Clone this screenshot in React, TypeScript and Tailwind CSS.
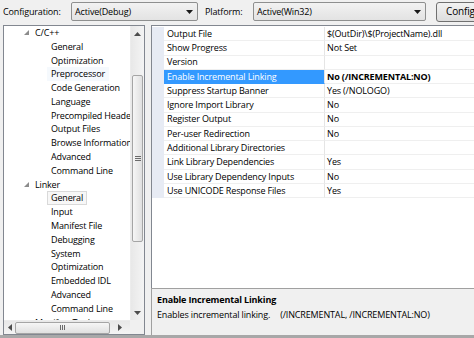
import React from 'react';

const treeRows: { label: string; level: number; expanded?: boolean; selected?: boolean; hover?: boolean }[] = [
  { label: 'C/C++', level: 1, expanded: true },
  { label: 'General', level: 2 },
  { label: 'Optimization', level: 2 },
  { label: 'Preprocessor', level: 2, hover: true },
  { label: 'Code Generation', level: 2 },
  { label: 'Language', level: 2 },
  { label: 'Precompiled Headers', level: 2 },
  { label: 'Output Files', level: 2 },
  { label: 'Browse Information', level: 2 },
  { label: 'Advanced', level: 2 },
  { label: 'Command Line', level: 2 },
  { label: 'Linker', level: 1, expanded: true },
  { label: 'General', level: 2, selected: true },
  { label: 'Input', level: 2 },
  { label: 'Manifest File', level: 2 },
  { label: 'Debugging', level: 2 },
  { label: 'System', level: 2 },
  { label: 'Optimization', level: 2 },
  { label: 'Embedded IDL', level: 2 },
  { label: 'Advanced', level: 2 },
  { label: 'Command Line', level: 2 },
  { label: 'Manifest Tool', level: 1 },
];

const props: { name: string; value: string; selected?: boolean }[] = [
  { name: 'Output File', value: '$(OutDir)\\$(ProjectName).dll' },
  { name: 'Show Progress', value: 'Not Set' },
  { name: 'Version', value: '' },
  { name: 'Enable Incremental Linking', value: 'No (/INCREMENTAL:NO)', selected: true },
  { name: 'Suppress Startup Banner', value: 'Yes (/NOLOGO)' },
  { name: 'Ignore Import Library', value: 'No' },
  { name: 'Register Output', value: 'No' },
  { name: 'Per-user Redirection', value: 'No' },
  { name: 'Additional Library Directories', value: '' },
  { name: 'Link Library Dependencies', value: 'Yes' },
  { name: 'Use Library Dependency Inputs', value: 'No' },
  { name: 'Use UNICODE Response Files', value: 'Yes' },
];

const Arrow = ({ dir }: { dir: 'up' | 'down' | 'left' | 'right' }) => {
  const pts = {
    up: '0,4 3.5,0 7,4',
    down: '0,0 7,0 3.5,4',
    left: '4,0 4,7 0,3.5',
    right: '0,0 0,7 4,3.5',
  }[dir];
  const horiz = dir === 'left' || dir === 'right';
  return (
    <svg width={horiz ? 4 : 7} height={horiz ? 7 : 4} viewBox={horiz ? '0 0 4 7' : '0 0 7 4'}>
      <polygon points={pts} fill="#4d4d4d" />
    </svg>
  );
};

const ComboBox = ({ text, width }: { text: string; width: string }) => (
  <div
    className={`${width} h-[19px] shrink-0 flex items-center justify-between rounded-[2px] border border-[#8e8f8f] bg-gradient-to-b from-[#f2f2f2] to-[#e3e3e3] pl-[3px] pr-[4px]`}
  >
    <span>{text}</span>
    <svg width="7" height="4" viewBox="0 0 7 4">
      <polygon points="0,0 7,0 3.5,4" fill="#1a1a1a" />
    </svg>
  </div>
);

const App = () => {
  return (
    <div
      className="w-[474px] h-[338px] overflow-hidden flex flex-col bg-[#f0f0f0] text-[9px] tracking-[-0.15px] text-black"
      style={{ fontFamily: '"Open Sans", "Noto Sans", sans-serif' }}
    >
      {/* toolbar */}
      <div className="h-[25px] shrink-0 flex items-center pl-[3px] pb-[2px] whitespace-nowrap">
        <span className="w-[68px] shrink-0">Configuration:</span>
        <ComboBox text="Active(Debug)" width="w-[127px]" />
        <span className="ml-[7px] w-[48px] shrink-0">Platform:</span>
        <ComboBox text="Active(Win32)" width="w-[173px]" />
        <div className="ml-[10px] w-[80px] shrink-0 h-[20px] flex items-center overflow-hidden rounded-[3px] border border-[#707070] bg-gradient-to-b from-[#f2f2f2] to-[#dddddd] pl-[9px] text-[10px]">
          Configuration Manager...
        </div>
      </div>

      <div className="flex-1 flex pl-[3px] min-h-0">
        {/* tree */}
        <div className="w-[142px] shrink-0 flex flex-col border border-[#828790] bg-white">
          <div className="flex-1 flex min-h-0">
            <div className="flex-1 min-w-0 overflow-hidden">
              {treeRows.map((row, i) => (
                <div key={i} className="h-[13.8px] flex items-center whitespace-nowrap">
                  {row.level === 1 ? (
                    <>
                      <span className="ml-[20px] w-[11px] shrink-0 flex items-center">
                        {row.expanded && (
                          <svg width="5" height="5" viewBox="0 0 5 5">
                            <polygon points="5,0 5,5 0,5" fill="#8c8c8c" />
                          </svg>
                        )}
                      </span>
                      <span>{row.label}</span>
                    </>
                  ) : (
                    <span
                      className={`ml-[43px] px-[3px] leading-[12px] border ${
                        row.selected
                          ? 'border-[#d9d9d9] bg-[#f7f7f7]'
                          : row.hover
                          ? 'border-transparent bg-[#f5f9fd]'
                          : 'border-transparent'
                      }`}
                    >
                      {row.label}
                    </span>
                  )}
                </div>
              ))}
            </div>
            {/* vertical scrollbar */}
            <div className="w-[14px] shrink-0 flex flex-col bg-gradient-to-r from-[#e8e8e8] to-[#f4f4f4] border-l border-[#ececec]">
              <div className="h-[15px] flex items-center justify-center">
                <Arrow dir="up" />
              </div>
              <div className="h-[34px]" />
              <div className="h-[167px] mx-[1px] flex items-center justify-center rounded-[2px] border border-[#a5a5a5] bg-gradient-to-r from-[#f6f6f6] to-[#e0e0e0]">
                <div className="flex flex-col gap-[1px]">
                  <div className="w-[6px] h-[1px] bg-[#6b6b6b]" />
                  <div className="w-[6px] h-[1px] bg-[#6b6b6b]" />
                  <div className="w-[6px] h-[1px] bg-[#6b6b6b]" />
                </div>
              </div>
              <div className="flex-1" />
              <div className="h-[15px] flex items-center justify-center">
                <Arrow dir="down" />
              </div>
            </div>
          </div>
          {/* horizontal scrollbar */}
          <div className="h-[14px] shrink-0 flex">
            <div className="flex-1 flex items-center bg-gradient-to-b from-[#e8e8e8] to-[#f4f4f4] border-t border-[#ececec]">
              <div className="w-[11px] flex justify-center">
                <Arrow dir="left" />
              </div>
              <div className="w-[95px] h-[12px] flex items-center justify-center gap-[1px] rounded-[2px] border border-[#a5a5a5] bg-gradient-to-b from-[#f6f6f6] to-[#e0e0e0]">
                <div className="w-[1px] h-[5px] bg-[#6b6b6b]" />
                <div className="w-[1px] h-[5px] bg-[#6b6b6b]" />
                <div className="w-[1px] h-[5px] bg-[#6b6b6b]" />
              </div>
              <div className="flex-1 flex justify-center">
                <Arrow dir="right" />
              </div>
            </div>
            <div className="w-[14px] bg-[#f0f0f0]" />
          </div>
        </div>

        {/* property grid */}
        <div className="ml-[6px] flex-1 min-w-0 flex flex-col">
          <div className="flex-1 min-h-0 border-l border-t border-[#828790] bg-white pt-[1px]">
            {props.map((p) => (
              <div key={p.name} className="h-[14.27px] flex whitespace-nowrap">
                <div className="w-[12px] shrink-0 bg-[#e7ebf4]" />
                <div
                  className={`w-[161px] shrink-0 pl-[3px] flex items-center overflow-hidden border-b border-r ${
                    p.selected ? 'bg-[#3399ff] text-white border-[#3399ff] border-r-[#e5e5e5]' : 'border-[#efefef] border-r-[#e5e5e5]'
                  }`}
                >
                  {p.name}
                </div>
                <div className={`flex-1 pl-[2px] flex items-center border-b border-[#efefef] ${p.selected ? 'font-bold' : ''}`}>
                  {p.value}
                </div>
              </div>
            ))}
          </div>
          <div className="h-[47px] shrink-0 border-t border-l border-[#a0a0a0] bg-[#f0f0f0] pl-[5px] pt-[3px] whitespace-nowrap">
            <div className="h-[15px] flex items-center font-bold">Enable Incremental Linking</div>
            <div className="h-[15px] flex items-center">
              <span>Enables incremental linking.</span>
              <span className="ml-[10px]">(/INCREMENTAL, /INCREMENTAL:NO)</span>
            </div>
          </div>
        </div>
      </div>

      <div className="h-[3px] shrink-0 bg-[#a8a8a8]" />
    </div>
  );
};

export default App;
